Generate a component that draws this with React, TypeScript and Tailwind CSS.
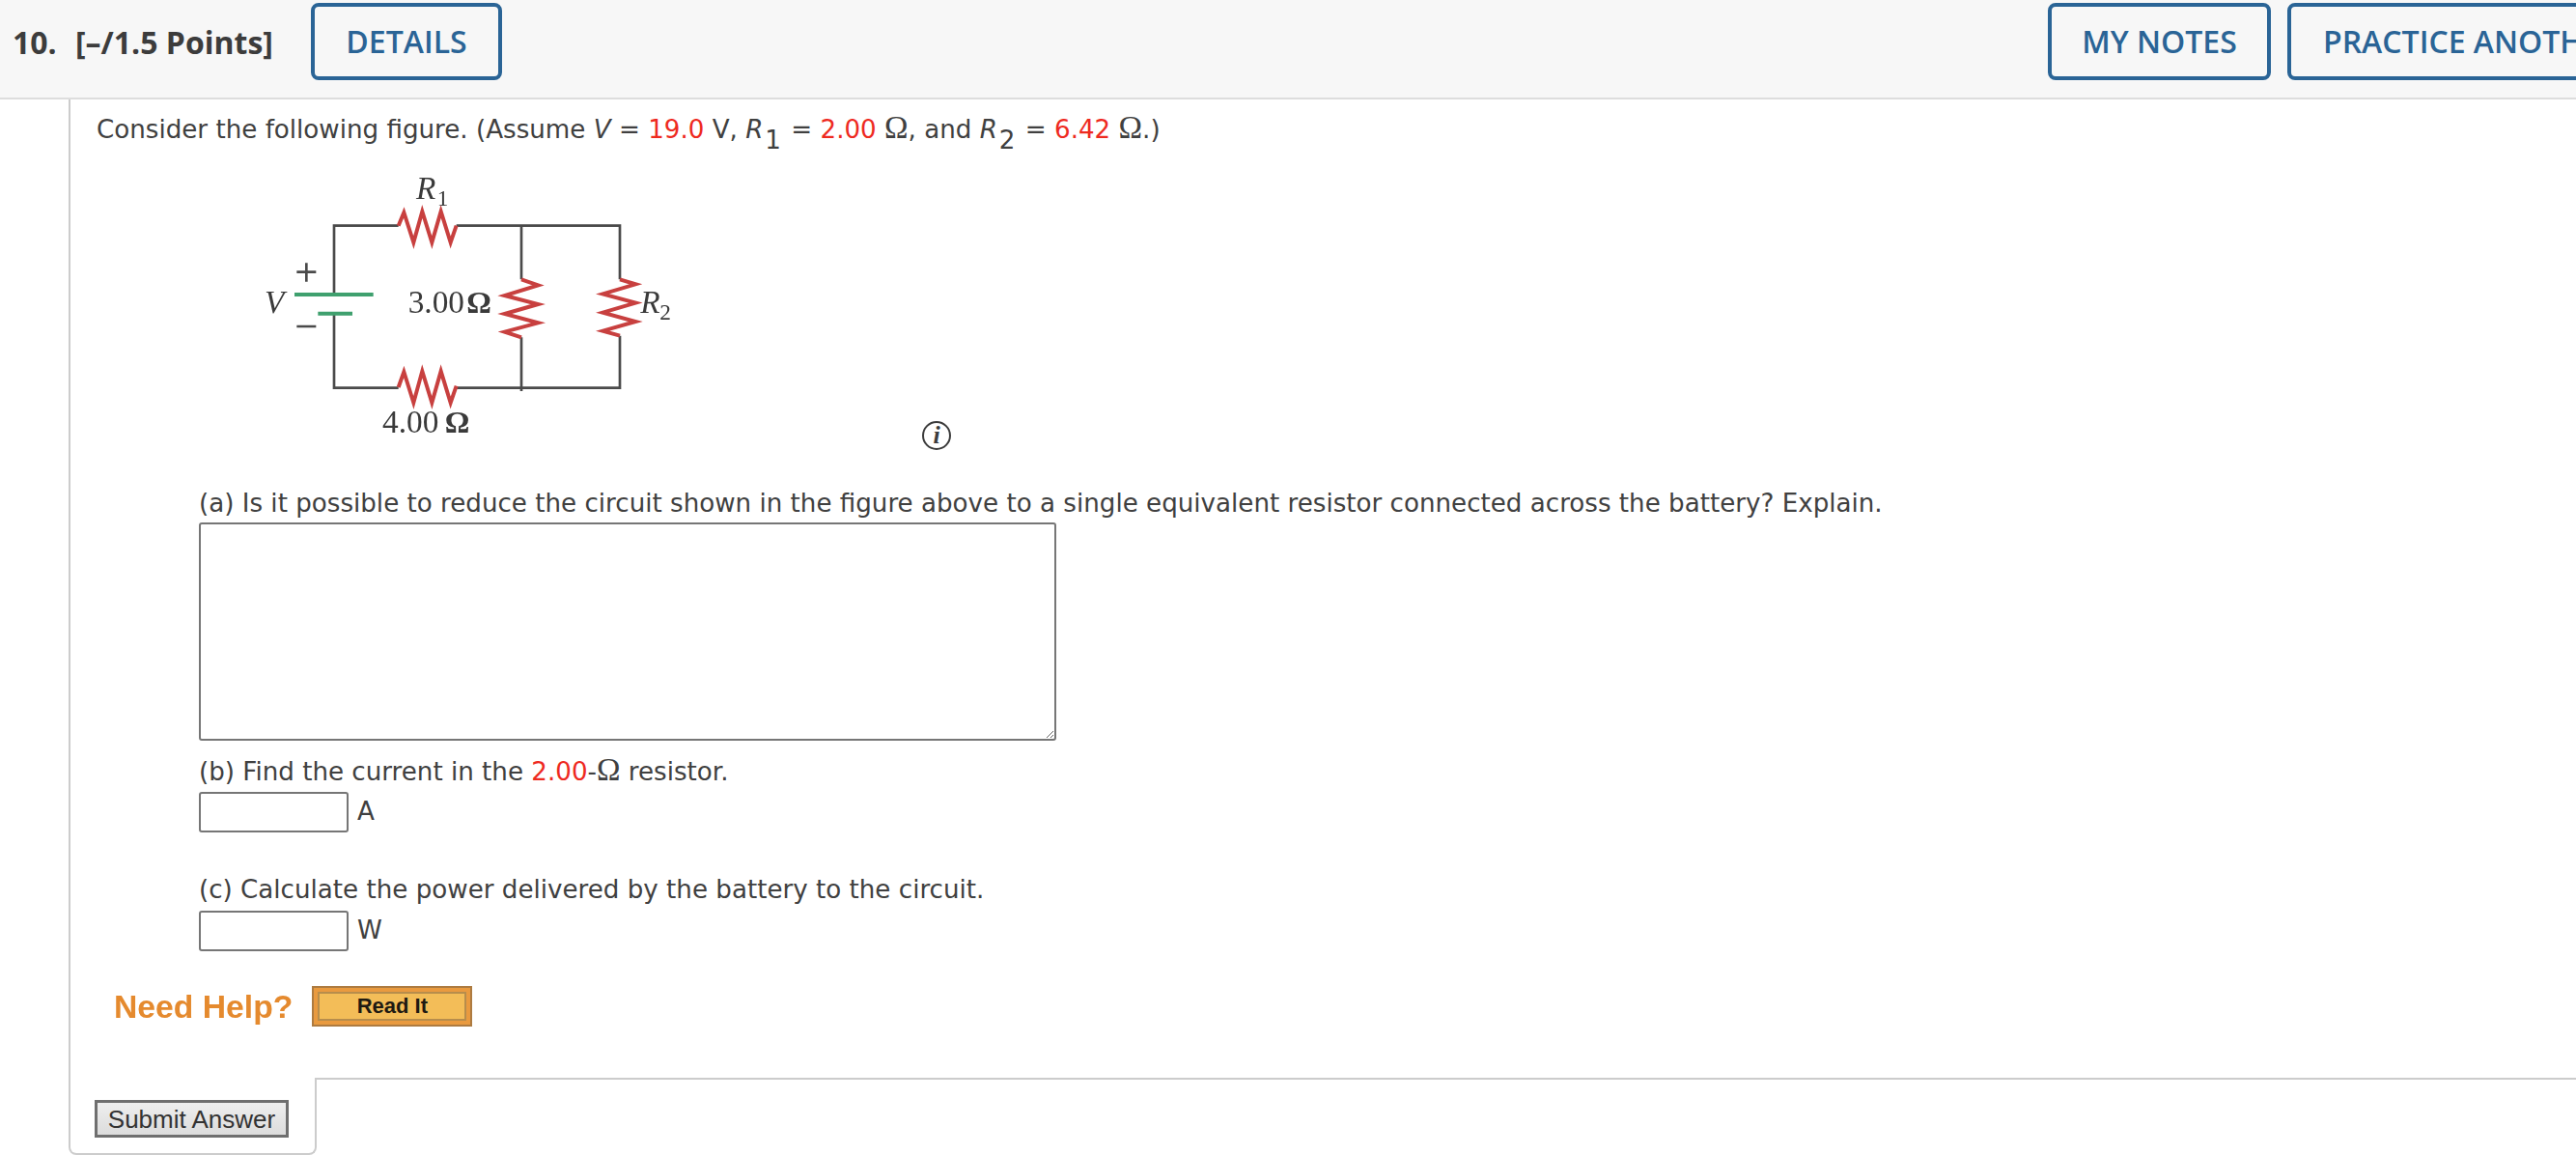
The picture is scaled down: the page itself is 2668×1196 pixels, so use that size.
const sans = 'font-["DejaVu_Sans",Verdana,sans-serif]'

function Red({ children }: { children: React.ReactNode }) {
  return <span className="text-[#ee2a1f]">{children}</span>
}

function Ohm() {
  return <span className='font-["Liberation_Serif",serif] text-[33px] leading-none'>Ω</span>
}

function Sub({ children }: { children: React.ReactNode }) {
  return <span className="relative top-[11px] mx-[2px]">{children}</span>
}

function HeaderButton({ label, className }: { label: string; className: string }) {
  return (
    <button
      className={`flex h-[80px] shrink-0 items-center justify-center whitespace-nowrap rounded-[8px] border-4 border-[#2a6496] bg-transparent text-[32px] font-semibold text-[#2a6496] ${className}`}
    >
      {label}
    </button>
  )
}

function Circuit() {
  return (
    <svg viewBox="0 0 1500 930" className="h-[310px] w-[500px] shrink-0 blur-[0.7px]">
      <g fill="none" stroke="#4a4a4a" strokeWidth="8">
        <path d="M348 432V218H548M728 218H1236V385M930 218V385M930 565V732M1236 560V722H728M548 722H348V492" />
        <path d="M232 362H292M262 334V392M232 531H292" />
      </g>
      <g fill="none" stroke="#c8403f" strokeWidth="12">
        <path d="M548 218L565 177L595 270L622 174L652 270L680 174L710 270L728 218" />
        <path d="M548 720L565 672L595 768L622 670L652 768L680 670L710 768L728 716" />
        <path d="M930 385L982 403L878 435L982 462L878 492L982 520L878 548L930 565" />
        <path d="M1236 385L1285 400L1183 430L1285 458L1183 488L1285 516L1183 545L1236 560" />
      </g>
      <path d="M225 432H470M298 491H405" stroke="#3fa06e" strokeWidth="12" />
      <g fill="#3a3a3a" fontFamily="'Liberation Serif', serif" fontSize="100">
        <text x="132" y="490" fontStyle="italic">V</text>
        <text x="603" y="135" fontStyle="italic">R</text>
        <text x="668" y="155" fontSize="70">1</text>
        <text x="578" y="490">3.00</text>
        <text x="760" y="490" fontWeight="bold" fontSize="96">Ω</text>
        <text x="1300" y="490" fontStyle="italic">R</text>
        <text x="1360" y="510" fontSize="70">2</text>
        <text x="498" y="862">4.00</text>
        <text x="692" y="862" fontWeight="bold" fontSize="96">Ω</text>
      </g>
    </svg>
  )
}

function InfoIcon() {
  return (
    <span className='flex h-[30px] w-[30px] items-center justify-center rounded-full border-2 border-[#3c3c3c] font-["Liberation_Serif",serif] text-[26px] font-bold italic leading-none text-[#3c3c3c]'>
      i
    </span>
  )
}

export default function App() {
  return (
    <div className={`h-[1196px] w-[2668px] overflow-hidden bg-white text-[26.15px] text-[#404040] ${sans}`}>
      <header className='flex h-[103px] overflow-hidden border-b-2 border-[#dddddd] bg-[#f7f7f7] pt-[3px] font-["Open_Sans",sans-serif]'>
        <div className="flex w-[2121px] shrink-0 items-start">
          <div className="mt-[17px] flex w-[322px] pl-[13px] text-[32px] font-bold text-[#3c3c3c]">
            <span className="w-[65px]">10.</span>
            <span>[–/1.5 Points]</span>
          </div>
          <HeaderButton label="DETAILS" className="w-[198px]" />
        </div>
        <HeaderButton label="MY NOTES" className="w-[231px]" />
        <HeaderButton label="PRACTICE ANOTHER" className="ml-[17px] px-[33px]" />
      </header>

      <main className="ml-[71px] h-[1013px] border-l-2 border-[#cccccc]">
        <p className="ml-[27px] pt-[13px] leading-[32px]">
          Consider the following figure. (Assume <i>V</i> = <Red>19.0</Red> V, <i>R</i>
          <Sub>1</Sub> = <Red>2.00</Red> <Ohm />, and <i>R</i>
          <Sub>2</Sub> = <Red>6.42</Red> <Ohm />.)
        </p>

        <div className="mt-[11px] flex items-start pl-[157px]">
          <Circuit />
          <div className="ml-[225px] mt-[275px]">
            <InfoIcon />
          </div>
        </div>

        <div className="ml-[133px] mt-[34px]">
          <p className="leading-[32px]">
            (a) Is it possible to reduce the circuit shown in the figure above to a single equivalent resistor
            connected across the battery? Explain.
          </p>
          <textarea className="mt-[4px] block h-[226px] w-[888px] rounded-[3px] border-2 border-[#767676] bg-white" />

          <p className="mt-[14px] leading-[32px]">
            (b) Find the current in the <Red>2.00</Red>-<Ohm /> resistor.
          </p>
          <div className="mt-[5px] flex items-center gap-[9px]">
            <input className="h-[42px] w-[155px] rounded-[3px] border-2 border-[#767676] bg-white" />
            <span>A</span>
          </div>

          <p className="mt-[43px] leading-[32px]">(c) Calculate the power delivered by the battery to the circuit.</p>
          <div className="mt-[6px] flex items-center gap-[9px]">
            <input className="h-[42px] w-[155px] rounded-[3px] border-2 border-[#767676] bg-white" />
            <span>W</span>
          </div>
        </div>

        <div className='ml-[45px] mt-[32px] flex items-center gap-[20px] font-["Liberation_Sans",Arial,sans-serif]'>
          <span className="text-[33.7px] font-bold text-[#e58a2e] blur-[0.4px]">Need Help?</span>
          <button className="flex h-[42px] w-[166px] items-center justify-center border-2 border-[#ad7b41] bg-[#e99a3f] p-[4px]">
            <span className="flex h-full w-full items-center justify-center border-2 border-[#b78d4c] bg-[#f3bd58] text-[22px] font-bold leading-none text-[#1e1a12]">
              Read It
            </span>
          </button>
        </div>
      </main>

      <footer className="flex h-[80px]">
        <div className="ml-[71px] flex w-[257px] items-end rounded-b-[8px] border-x-2 border-b-2 border-[#cccccc] pb-[16px] pl-[25px]">
          <button className='h-[39px] w-[201px] border-[3px] border-[#6f6f6f] bg-gradient-to-b from-[#eeeeee] to-[#dcdcdc] font-["Liberation_Sans",Arial,sans-serif] text-[26px] leading-none text-[#333333]'>
            Submit Answer
          </button>
        </div>
        <div className="flex-1 border-t-2 border-[#cccccc]" />
      </footer>
    </div>
  )
}
